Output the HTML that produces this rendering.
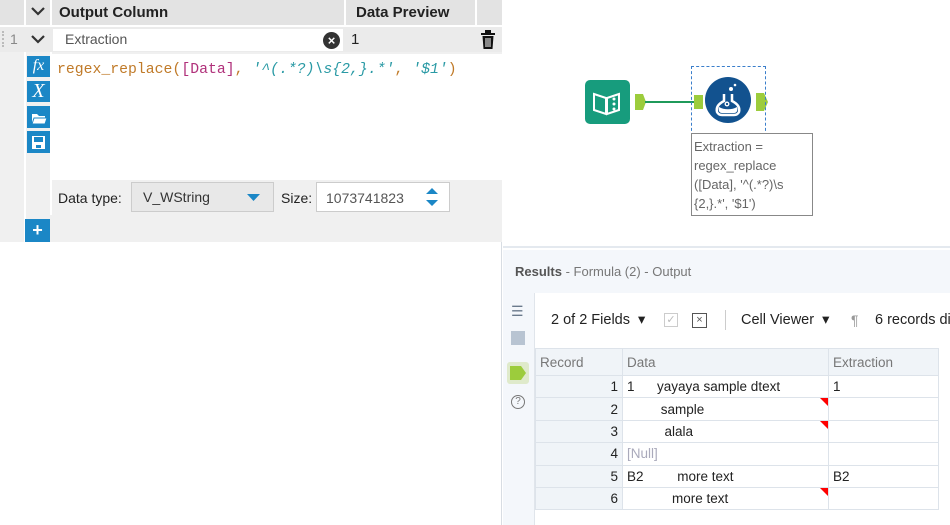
<!DOCTYPE html>
<html><head><style>
*{box-sizing:border-box;margin:0;padding:0}
body{width:950px;height:525px;position:relative;background:#fff;font-family:"Liberation Sans",sans-serif;font-size:14px;overflow:hidden;color:#222}
.a{position:absolute}
.mono{font-family:"Liberation Mono",monospace}
td{border:1px solid #dde3ea;height:22.4px;padding:0 4px;font-size:13.5px;white-space:pre}
</style></head><body>
<!-- left panel -->
<div class="a" style="left:0;top:0;width:502px;height:525px;background:#fff;border-right:1px solid #d8dde3"></div>
<div class="a" style="left:0;top:0;width:502px;height:242px;background:#f0f0f0"></div>
<div class="a" style="left:0;top:0;width:502px;height:25px;background:#e3e3e3"></div>
<div class="a" style="left:24px;top:0;width:2px;height:242px;background:#fff"></div>
<div class="a" style="left:50px;top:0;width:2px;height:215px;background:#fff"></div>
<div class="a" style="left:344px;top:0;width:2px;height:25px;background:#fff"></div>
<div class="a" style="left:475px;top:0;width:2px;height:25px;background:#fff"></div>
<div class="a" style="left:0;top:25px;width:502px;height:2px;background:#fff"></div>
<svg class="a" style="left:30px;top:6px" width="16" height="10"><path d="M2 2l6 6 6-6" stroke="#333" stroke-width="2.2" fill="none"/></svg>
<div class="a" style="left:59px;top:4px;font-weight:bold;font-size:15px">Output Column</div>
<div class="a" style="left:356px;top:4px;font-weight:bold;font-size:15px">Data Preview</div>
<div class="a" style="left:0;top:27px;width:502px;height:25px;background:#ebebeb"></div>
<div class="a" style="left:2px;top:31px;width:2px;height:16px;border-left:2px dotted #bbb"></div>
<div class="a" style="left:10px;top:31px;color:#888;font-size:14px">1</div>
<svg class="a" style="left:30px;top:34px" width="16" height="10"><path d="M2 2l6 6 6-6" stroke="#333" stroke-width="2.2" fill="none"/></svg>
<div class="a" style="left:53px;top:29px;width:290px;height:22px;background:#fff"></div>
<div class="a" style="left:65px;top:31px;color:#555;font-size:14px">Extraction</div>
<div class="a" style="left:323px;top:32px;width:17px;height:17px;border-radius:50%;background:#333;color:#fff;font-size:13px;font-weight:bold;text-align:center;line-height:17px">×</div>
<div class="a" style="left:351px;top:31px;font-size:15px">1</div>
<svg class="a" style="left:480px;top:30px" width="16" height="20"><rect x="1" y="3" width="14" height="2" fill="#111"/><rect x="5" y="0" width="6" height="3" fill="#111"/><path d="M2.5 6h11l-1 13h-9z" fill="#111"/><path d="M6 8v9M8 8v9M10 8v9" stroke="#fff" stroke-width="1"/></svg>
<div class="a" style="left:52px;top:54px;width:450px;height:126px;background:#fff"></div>
<div class="a" style="left:27px;top:56px;width:23px;height:21px;background:#1b87c6;color:#fff;font-family:'Liberation Serif',serif;font-style:italic;font-size:16px;text-align:center;line-height:20px">fx</div>
<div class="a" style="left:27px;top:81px;width:23px;height:21px;background:#1b87c6;color:#fff;font-family:'Liberation Serif',serif;font-style:italic;font-size:20px;text-align:center;line-height:21px">X</div>
<div class="a" style="left:27px;top:106px;width:23px;height:22px;background:#1b87c6"><svg width="23" height="22"><path d="M5 8h5l2 2h6v8H5z" fill="#fff"/><path d="M7 12h13l-2 6H5z" fill="#fff" stroke="#1b87c6"/></svg></div>
<div class="a" style="left:27px;top:131px;width:23px;height:22px;background:#1b87c6"><svg width="23" height="22"><rect x="5" y="5" width="13" height="13" fill="#fff"/><rect x="7" y="6" width="9" height="5" fill="#1b87c6"/><rect x="9" y="14" width="5" height="3" fill="#1b87c6"/></svg></div>
<div class="a mono" style="left:57px;top:62px;font-size:14.8px;color:#c07a28">regex_replace(<span style="color:#b0307a">[Data]</span>, <span style="color:#2a9aa5;font-style:italic">'^(.*?)\s{2,}.*'</span>, <span style="color:#2a9aa5;font-style:italic">'$1'</span>)</div>
<div class="a" style="left:58px;top:190px;font-size:14px">Data type:</div>
<div class="a" style="left:131px;top:182px;width:143px;height:30px;background:#e8e8e8;border:1px solid #ccc"></div>
<div class="a" style="left:143px;top:189px;font-size:14px;color:#333">V_WString</div>
<svg class="a" style="left:247px;top:194px" width="14" height="8"><path d="M0 0h13l-6.5 7z" fill="#1b87c6"/></svg>
<div class="a" style="left:281px;top:190px;font-size:14px">Size:</div>
<div class="a" style="left:316px;top:182px;width:134px;height:30px;background:#fff;border:1px solid #ccc"></div>
<div class="a" style="left:326px;top:190px;font-size:14px;color:#555">1073741823</div>
<svg class="a" style="left:424px;top:186px" width="16" height="22"><path d="M2 8l6-6 6 6z M2 14l6 6 6-6z" fill="#1b87c6"/></svg>
<div class="a" style="left:25px;top:219px;width:25px;height:23px;background:#1b87c6;color:#fff;font-weight:bold;font-size:18px;text-align:center;line-height:22px">+</div>
<!-- canvas -->
<div class="a" style="left:503px;top:0;width:447px;height:248px;background:#fff;border-bottom:2px solid #e4e9ef"></div>
<div class="a" style="left:585px;top:80px;width:45px;height:44px;background:#179c7d;border-radius:5px"></div>
<svg class="a" style="left:585px;top:80px" width="45" height="44"><path d="M9 14l12 4v16l-12-4zM34 14l-12 4v16l12-4z" fill="none" stroke="#fff" stroke-width="2"/><circle cx="29" cy="19" r="1.5" fill="#fff"/><circle cx="29" cy="24" r="1.5" fill="#fff"/><circle cx="29" cy="29" r="1.5" fill="#fff"/></svg>
<svg class="a" style="left:635px;top:92px" width="135" height="20"><path d="M0 2h8l3 8-3 8H0z" fill="#9ccc3c"/><path d="M10 10h50" stroke="#1f9a5a" stroke-width="2"/><rect x="59" y="3" width="9" height="14" fill="#9ccc3c"/><path d="M121 1h8l4 9-4 9h-8z" fill="#9ccc3c"/></svg>
<div class="a" style="left:691px;top:66px;width:75px;height:70px;border:1px dashed #3a7ecb"></div>
<div class="a" style="left:705px;top:77px;width:46px;height:46px;border-radius:50%;background:#12528f"></div>
<svg class="a" style="left:705px;top:77px" width="46" height="46"><path d="M19 17v7c-6 3-8 7-7 11 1 2 3 3 5 3h12c2 0 4-1 5-3 1-4-1-8-7-11v-7" fill="none" stroke="#fff" stroke-width="2.5"/><path d="M14 30c5 3 13 3 18 0c1 3 0 6-3 6H17c-3 0-4-3-3-6z" fill="#fff"/><circle cx="22" cy="27" r="1.8" fill="none" stroke="#fff" stroke-width="1.3"/><circle cx="26" cy="12" r="2" fill="#fff"/><circle cx="30" cy="8" r="1.3" fill="#fff"/></svg>
<div class="a" style="left:691px;top:133px;width:122px;height:83px;border:1px solid #888;background:#fff;padding:3px 2px;font-size:13px;line-height:19px;color:#666">Extraction =<br>regex_replace<br>([Data], '^(.*?)\s<br>{2,}.*', '$1')</div>
<!-- results -->
<div class="a" style="left:503px;top:250px;width:447px;height:43px;background:#f4f7fb"></div>
<div class="a" style="left:515px;top:264px;font-size:13px;color:#777"><b style="color:#555">Results</b> - Formula (2) - Output</div>
<div class="a" style="left:503px;top:293px;width:32px;height:232px;background:#f4f7fb;border-right:1px solid #e0e5eb"></div>
<div class="a" style="left:511px;top:303px;font-size:14px;color:#6a7a8c">☰</div>
<div class="a" style="left:511px;top:331px;width:14px;height:14px;background:#b8c4d2"></div>
<div class="a" style="left:507px;top:362px;width:22px;height:22px;background:#dfeacb;border-radius:3px"></div>
<svg class="a" style="left:510px;top:366px" width="17" height="14"><path d="M0 0h11l5 7-5 7H0z" fill="#9ccc3c"/></svg>
<div class="a" style="left:511px;top:395px;width:14px;height:14px;border:1.3px solid #777;border-radius:50%;font-size:10px;text-align:center;line-height:11px;color:#777">?</div>
<div class="a" style="left:551px;top:312px;font-size:14.5px">2 of 2 Fields &nbsp;▾</div>
<div class="a" style="left:664px;top:313px;width:14px;height:14px;border:1px solid #ccc;color:#bbb;font-size:11px;line-height:12px;text-align:center">✓</div>
<div class="a" style="left:692px;top:313px;width:15px;height:15px;border:1.5px solid #555;color:#555;font-size:11px;line-height:12px;text-align:center">×</div>
<div class="a" style="left:725px;top:310px;width:1px;height:20px;background:#ccc"></div>
<div class="a" style="left:741px;top:312px;font-size:14.5px">Cell Viewer &nbsp;▾</div>
<div class="a" style="left:851px;top:312px;font-size:14px;color:#999">¶</div>
<div class="a" style="left:875px;top:312px;font-size:14.5px;white-space:nowrap">6 records di</div>
<table class="a" style="left:535px;top:348px;border-collapse:collapse;width:404px">
<tr style="background:#f0f4f8;color:#777"><td style="width:87px;height:27px">Record</td><td style="width:206px">Data</td><td>Extraction</td></tr>
<tr><td style="text-align:right;background:#f0f4f8">1</td><td>1      yayaya sample dtext</td><td>1</td></tr>
<tr><td style="text-align:right;background:#f0f4f8">2</td><td style="position:relative">         sample<span class="a" style="right:0;top:0;border-top:8px solid red;border-left:8px solid transparent"></span></td><td></td></tr>
<tr><td style="text-align:right;background:#f0f4f8">3</td><td style="position:relative">          alala<span class="a" style="right:0;top:0;border-top:8px solid red;border-left:8px solid transparent"></span></td><td></td></tr>
<tr><td style="text-align:right;background:#f0f4f8">4</td><td style="color:#aab">[Null]</td><td></td></tr>
<tr><td style="text-align:right;background:#f0f4f8">5</td><td>B2         more text</td><td>B2</td></tr>
<tr><td style="text-align:right;background:#f0f4f8">6</td><td style="position:relative">            more text<span class="a" style="right:0;top:0;border-top:8px solid red;border-left:8px solid transparent"></span></td><td></td></tr>
</table>
</body></html>
